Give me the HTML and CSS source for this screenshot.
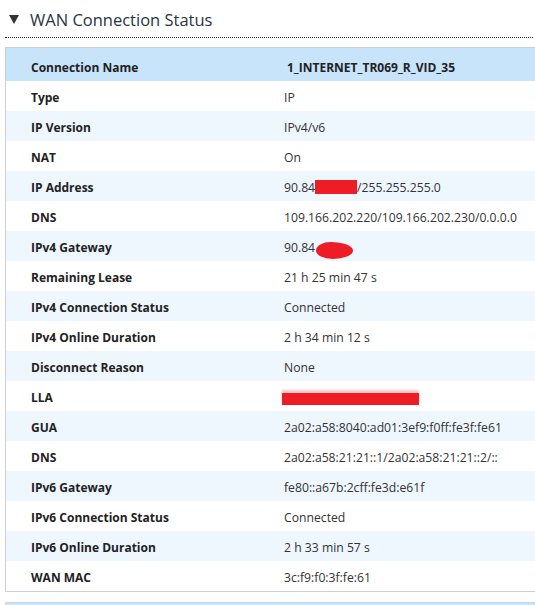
FILE: index.html
```html
<!DOCTYPE html>
<html>
<head>
<meta charset="utf-8">
<link rel="stylesheet" href="styles.css">
</head>
<body>
<div class="page">
  <div class="section-title">
    <span class="caret"></span>
    <span class="title-text">WAN Connection Status</span>
  </div>
  <div class="divider"></div>
  <div class="status-table">
    <div class="row head"><div class="label">Connection Name</div><div class="value">1_INTERNET_TR069_R_VID_35</div></div>
    <div class="row"><div class="label">Type</div><div class="value">IP</div></div>
    <div class="row alt"><div class="label">IP Version</div><div class="value">IPv4/v6</div></div>
    <div class="row"><div class="label">NAT</div><div class="value">On</div></div>
    <div class="row alt"><div class="label">IP Address</div><div class="value">90.84<span class="redact-box"></span>/255.255.255.0</div></div>
    <div class="row"><div class="label">DNS</div><div class="value">109.166.202.220/109.166.202.230/0.0.0.0</div></div>
    <div class="row alt"><div class="label">IPv4 Gateway</div><div class="value">90.84<span class="redact-blob"></span></div></div>
    <div class="row"><div class="label">Remaining Lease</div><div class="value">21 h 25 min 47 s</div></div>
    <div class="row alt"><div class="label">IPv4 Connection Status</div><div class="value">Connected</div></div>
    <div class="row"><div class="label">IPv4 Online Duration</div><div class="value">2 h 34 min 12 s</div></div>
    <div class="row alt"><div class="label">Disconnect Reason</div><div class="value">None</div></div>
    <div class="row"><div class="label">LLA</div><div class="value"><span class="redact-bar"></span></div></div>
    <div class="row alt"><div class="label">GUA</div><div class="value">2a02:a58:8040:ad01:3ef9:f0ff:fe3f:fe61</div></div>
    <div class="row"><div class="label">DNS</div><div class="value">2a02:a58:21:21::1/2a02:a58:21:21::2/::</div></div>
    <div class="row alt"><div class="label">IPv6 Gateway</div><div class="value">fe80::a67b:2cff:fe3d:e61f</div></div>
    <div class="row"><div class="label">IPv6 Connection Status</div><div class="value">Connected</div></div>
    <div class="row alt"><div class="label">IPv6 Online Duration</div><div class="value">2 h 33 min 57 s</div></div>
    <div class="row"><div class="label">WAN MAC</div><div class="value">3c:f9:f0:3f:fe:61</div></div>
  </div>
  <div class="next-table"></div>
</div>
</body>
</html>
```

FILE: styles.css
```css
html, body {
  margin: 0;
  padding: 0;
  background: #fff;
  overflow: hidden;
}
.page {
  width: 535px;
  height: 605px;
  overflow: hidden;
  font-family: "Open Sans", "Noto Sans", sans-serif;
  color: #333;
}
.section-title {
  display: flex;
  align-items: center;
  height: 37px;
  padding-left: 9px;
  padding-top: 1px;
  box-sizing: border-box;
}
.caret {
  width: 0;
  height: 0;
  border-left: 5px solid transparent;
  border-right: 5px solid transparent;
  border-top: 9px solid #333;
  margin-right: 11px;
  margin-top: 1px;
}
.title-text {
  font-size: 16.5px;
  color: #2a3340;
}
.divider {
  margin-left: 5px;
  width: 528px;
  border-top: 1px dotted #222;
}
.status-table {
  margin-top: 9px;
  margin-left: 5px;
  width: 540px;
  border: 1px solid #cfcfcf;
  border-right: none;
}
.row {
  display: grid;
  grid-template-columns: 278px 1fr;
  height: 30px;
  align-items: center;
  font-size: 12px;
  padding-top: 2px;
  box-sizing: border-box;
}
.row.head {
  height: 33px;
  padding-top: 5px;
  background: #c8e4fb;
}
.row.alt {
  background: #eef6fe;
}
.label {
  padding-left: 25px;
  font-weight: 700;
  color: #222;
}
.value {
  display: flex;
  align-items: center;
  color: #333;
  font-size: 12.2px;
}
.head .value {
  font-weight: 700;
  padding-left: 3px;
  color: #222;
  font-size: 12px;
}
.redact-box {
  display: inline-block;
  width: 42px;
  height: 14px;
  background: #ee1c25;
}
.redact-blob {
  display: inline-block;
  width: 37px;
  height: 17px;
  margin-left: 1px;
  margin-top: 6px;
  background: #ee1c25;
  border-radius: 40% 60% 55% 45% / 50% 50% 50% 50%;
}
.redact-bar {
  display: inline-block;
  width: 137px;
  height: 12px;
  margin-left: -2px;
  margin-top: 4px;
  background: #ee1c25;
  box-shadow: 0 -3px 2px #f6c6c8;
}
.next-table {
  margin-top: 10px;
  margin-left: 5px;
  height: 20px;
  border: 1px solid #b9d9f2;
  background: #c8e4fb;
}
```
